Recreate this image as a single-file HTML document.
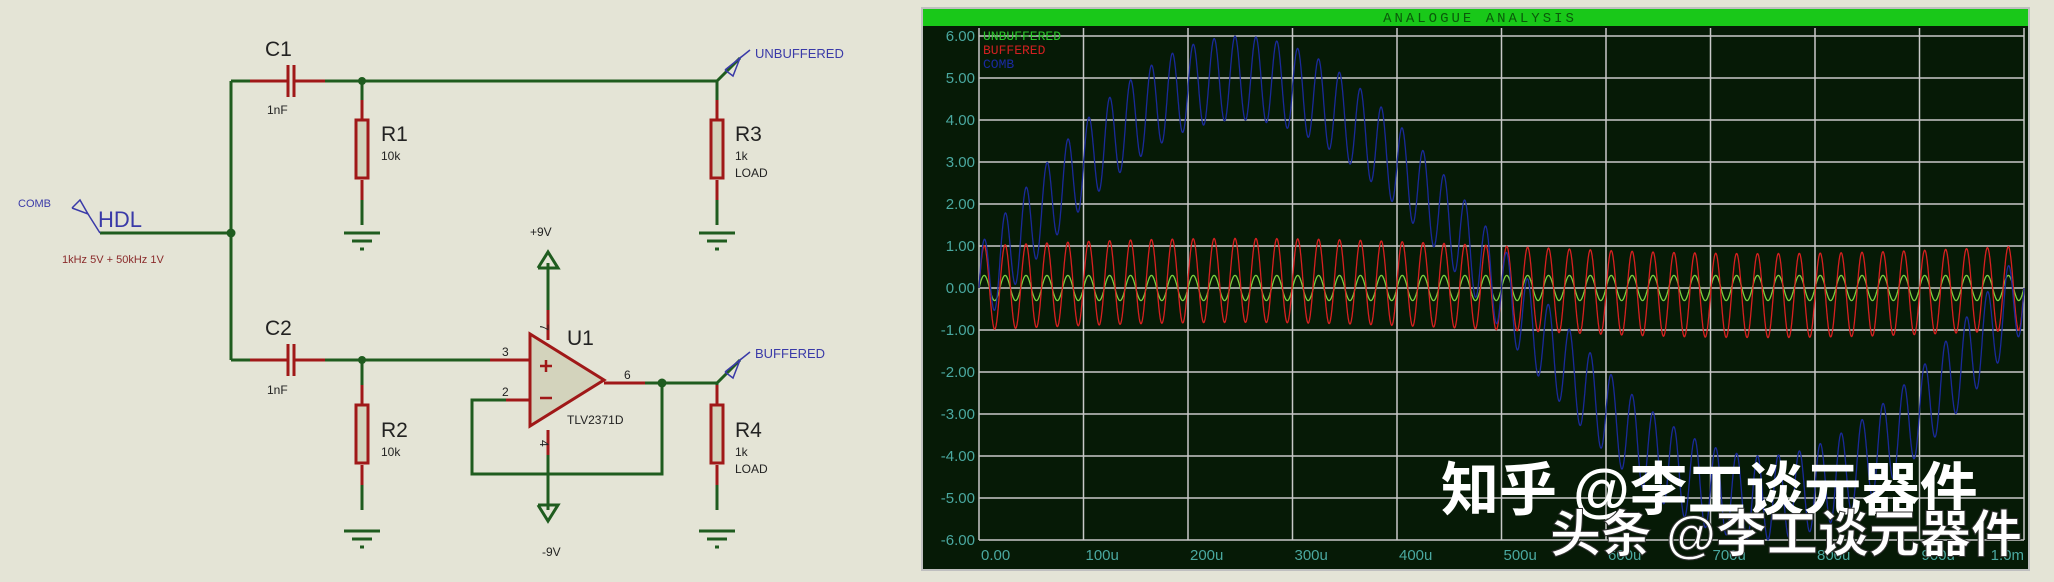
<!DOCTYPE html>
<html><head><meta charset="utf-8"><style>
html,body{margin:0;padding:0;background:#e4e4d6;width:2054px;height:582px;overflow:hidden}
svg{display:block}
text{font-family:"Liberation Sans",sans-serif}
.mono{font-family:"Liberation Mono",monospace}
.wm{font-family:"Liberation Sans","Noto Sans CJK SC",sans-serif;font-weight:bold;fill:#fff}
</style></head><body>
<svg id="s" width="2054" height="582" viewBox="0 0 2054 582" xmlns="http://www.w3.org/2000/svg">
<rect width="2054" height="582" fill="#e4e4d6"/>
<g stroke="#1f5c1f" stroke-width="3" fill="none">
<polyline points="231,81 250,81"/>
<polyline points="231,81 231,360"/>
<polyline points="100,233 231,233"/>
<polyline points="231,360 250,360"/>
<polyline points="325,81 717,81 717,112"/>
<polyline points="362,81 362,112"/>
<polyline points="362,186 362,225"/>
<polyline points="717,186 717,225"/>
<polyline points="325,360 490,360"/>
<polyline points="362,360 362,393"/>
<polyline points="362,467 362,510"/>
<polyline points="717,467 717,510"/>
<polyline points="640,383 717,383 717,393"/>
<polyline points="662,383 662,474 472,474 472,400 510,400"/>
<polyline points="548,263 548,310"/>
<polyline points="548,455 548,510"/>
<polyline points="717,81 740,58"/>
<polyline points="717,383 740,360"/>
</g>
<g stroke="#a01818" stroke-width="3" fill="none">
<line x1="250" y1="81" x2="288" y2="81"/><line x1="294" y1="81" x2="325" y2="81"/>
<line x1="250" y1="360" x2="288" y2="360"/><line x1="294" y1="360" x2="325" y2="360"/>
<line x1="362" y1="100" x2="362" y2="120"/><line x1="362" y1="180" x2="362" y2="200"/>
<line x1="717" y1="100" x2="717" y2="120"/><line x1="717" y1="180" x2="717" y2="200"/>
<line x1="362" y1="385" x2="362" y2="405"/><line x1="362" y1="465" x2="362" y2="485"/>
<line x1="717" y1="385" x2="717" y2="405"/><line x1="717" y1="465" x2="717" y2="485"/>
<line x1="490" y1="360" x2="529" y2="360"/><line x1="506" y1="400" x2="529" y2="400"/>
<line x1="604" y1="383" x2="645" y2="383"/>
<line x1="548" y1="310" x2="548" y2="340"/><line x1="548" y1="430" x2="548" y2="455"/>
<line x1="288" y1="65" x2="288" y2="97"/><line x1="294" y1="65" x2="294" y2="97"/>
<line x1="288" y1="344" x2="288" y2="376"/><line x1="294" y1="344" x2="294" y2="376"/>
</g>
<g fill="#d3d3bc" stroke="#a01818" stroke-width="3">
<rect x="356" y="120" width="12" height="58"/><rect x="711" y="120" width="12" height="58"/>
<rect x="356" y="405" width="12" height="58"/><rect x="711" y="405" width="12" height="58"/>
<polygon points="530,334 530,426 604,380"/>
</g>
<g stroke="#a01818" stroke-width="2.5"><line x1="540" y1="366" x2="552" y2="366"/><line x1="546" y1="360" x2="546" y2="372"/><line x1="540" y1="398" x2="552" y2="398"/></g>
<g stroke="#1f5c1f" stroke-width="3">
<line x1="344" y1="233" x2="380" y2="233"/><line x1="352" y1="241" x2="372" y2="241"/><line x1="360" y1="249" x2="364" y2="249"/>
<line x1="699" y1="233" x2="735" y2="233"/><line x1="707" y1="241" x2="727" y2="241"/><line x1="715" y1="249" x2="719" y2="249"/>
<line x1="344" y1="531" x2="380" y2="531"/><line x1="352" y1="539" x2="372" y2="539"/><line x1="360" y1="547" x2="364" y2="547"/>
<line x1="699" y1="531" x2="735" y2="531"/><line x1="707" y1="539" x2="727" y2="539"/><line x1="715" y1="547" x2="719" y2="547"/>
</g>
<g fill="none" stroke="#1f5c1f" stroke-width="3">
<polyline points="538,268 548,252 558,268 538,268"/>
<polyline points="538,505 548,521 558,505 538,505"/>
</g>
<g fill="none" stroke="#3a3aa8" stroke-width="1.5">
<polyline points="725,70 740,58 733,76 725,70"/><line x1="740" y1="58" x2="750" y2="50"/>
<polyline points="725,372 740,360 733,378 725,372"/><line x1="740" y1="360" x2="750" y2="352"/>
<polyline points="72,208 80,200 88,214 72,208"/><line x1="88" y1="214" x2="100" y2="233"/>
</g>
<g fill="#1f5c1f"><circle cx="362" cy="81" r="4"/><circle cx="231" cy="233" r="4.5"/><circle cx="362" cy="360" r="4"/><circle cx="662" cy="383" r="4.5"/></g>
<g fill="#222">
<text x="265" y="56" font-size="21">C1</text><text x="265" y="335" font-size="21">C2</text>
<text x="267" y="114" font-size="12">1nF</text><text x="267" y="394" font-size="12">1nF</text>
<text x="381" y="141" font-size="21">R1</text><text x="381" y="160" font-size="12">10k</text>
<text x="735" y="141" font-size="21">R3</text><text x="735" y="160" font-size="12">1k</text><text x="735" y="177" font-size="12">LOAD</text>
<text x="381" y="437" font-size="21">R2</text><text x="381" y="456" font-size="12">10k</text>
<text x="735" y="437" font-size="21">R4</text><text x="735" y="456" font-size="12">1k</text><text x="735" y="473" font-size="12">LOAD</text>
<text x="567" y="345" font-size="21">U1</text><text x="567" y="424" font-size="12">TLV2371D</text>
<text x="530" y="236" font-size="12">+9V</text><text x="542" y="556" font-size="12">-9V</text>
<text x="502" y="356" font-size="12">3</text><text x="502" y="396" font-size="12">2</text><text x="624" y="379" font-size="12">6</text>
<text x="540" y="324" font-size="12" transform="rotate(90 540 324)">7</text>
<text x="540" y="440" font-size="12" transform="rotate(90 540 440)">4</text>
</g>
<g fill="#3a3aa8">
<text x="755" y="58" font-size="13">UNBUFFERED</text><text x="755" y="358" font-size="13">BUFFERED</text>
<text x="18" y="207" font-size="11">COMB</text><text x="98" y="227" font-size="22">HDL</text>
</g>
<text x="62" y="263" font-size="11" fill="#8a2a2a">1kHz 5V + 50kHz 1V</text>
<rect x="922" y="8" width="1107" height="562" fill="#061a06" stroke="#bfbfbf" stroke-width="2"/>
<rect x="923" y="9" width="1105" height="17" fill="#19c819"/>
<text x="1480" y="22" class="mono" font-size="14" fill="#0a5a0a" text-anchor="middle" letter-spacing="3">ANALOGUE ANALYSIS</text>
<g id="grid" stroke="#c8c8c8" stroke-width="1.5" fill="none"></g>
<g id="lab" class="mono" font-size="15" fill="#4aa8a0"></g>
<g id="wav" fill="none" stroke-width="1.3"></g>
<text x="983" y="40" class="mono" font-size="13" fill="#2ac82a">UNBUFFERED</text>
<text x="983" y="54" class="mono" font-size="13" fill="#d02020">BUFFERED</text>
<text x="983" y="68" class="mono" font-size="13" fill="#1a2aa0">COMB</text>
<text x="1441" y="510" class="wm" font-size="58">知乎 @李工谈元器件</text>
<text x="1550" y="552" class="wm" font-size="51" stroke="#333" stroke-width="1">头条 @李工谈元器件</text>
</svg>
<script>
var ns="http://www.w3.org/2000/svg",L=979,R=2024,T=36,U=42,Z=T+6*U;
function el(p,t,a,txt){var e=document.createElementNS(ns,t);for(var k in a)e.setAttribute(k,a[k]);if(txt!=null)e.textContent=txt;document.getElementById(p).appendChild(e);return e;}
for(var i=0;i<=12;i++){var y=T+i*U;el("grid","line",{x1:L,y1:y,x2:R,y2:y});var v=6-i;el("lab","text",{x:975,y:y+5,"text-anchor":"end"},(v<0?"-":"")+Math.abs(v)+".00");}
var labs=["0.00","100u","200u","300u","400u","500u","600u","700u","800u","900u","1.0m"];
for(var i=0;i<=10;i++){var x=L+i*(R-L)/10;el("grid","line",{x1:x,y1:T-8,x2:x,y2:T+12*U});el("lab","text",{x:(i==10?R:x+2),y:560,"text-anchor":(i==10?"end":"start")},labs[i]);}
function wave(f,c){var p=[];for(var n=0;n<=3000;n++){var t=n/3000;p.push((L+t*(R-L)).toFixed(1)+","+(Z-f(t)*U).toFixed(1));}el("wav","polyline",{points:p.join(" "),stroke:c});}
var s=Math.sin,P=2*Math.PI;
wave(function(t){return 0.3*s(P*50*t);},"#7ad040");
wave(function(t){return 1.0*s(P*50*t)+0.18*s(P*t);},"#d82020");
wave(function(t){return 5*s(P*t)+1*s(P*50*t);},"#1a2a9a");
</script>
</body></html>
